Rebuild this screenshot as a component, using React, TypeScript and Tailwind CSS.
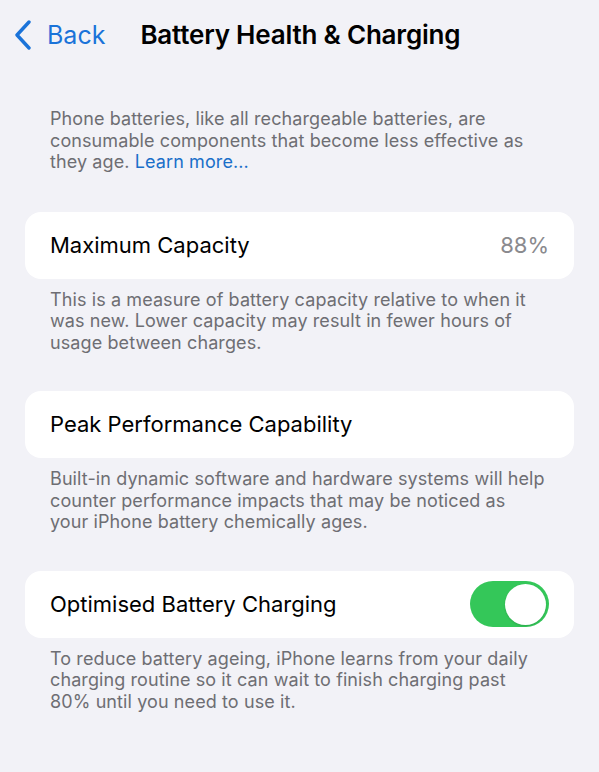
import React from "react";

function Card({ children }: { children: React.ReactNode }) {
  return (
    <div className="mx-[25px] h-[67px] rounded-[16px] bg-white flex items-center justify-between pl-[25px] pr-[25px]">
      {children}
    </div>
  );
}

function Footer({ children }: { children: React.ReactNode }) {
  return (
    <p className="ml-[50px] mr-[52px] mt-[10px] text-[18px] leading-[21.5px] text-[#6e6e73] tracking-[0.1px]">
      {children}
    </p>
  );
}

export default function App() {
  return (
    <div
      className="w-[599px] h-[772px] bg-[#f2f2f7] overflow-hidden"
      style={{ fontFamily: "Inter, 'Noto Sans', sans-serif" }}
    >
      <div className="h-[70px] flex items-center">
        <div className="flex items-center pl-[14px] text-[#1a73d9]">
          <svg width="18" height="30" viewBox="0 0 18 30">
            <path d="M15 2 L3 15 L15 28" fill="none" stroke="currentColor" strokeWidth="3.4" strokeLinecap="round" strokeLinejoin="round" />
          </svg>
          <span className="ml-[15px] text-[25px] leading-none">Back</span>
        </div>
        <span className="ml-[35px] text-[26px] font-semibold leading-none text-black tracking-[-0.2px]">
          Battery Health &amp; Charging
        </span>
      </div>

      <p className="ml-[50px] mr-[52px] mt-[38px] text-[18px] leading-[21.5px] text-[#6e6e73] tracking-[0.1px]">
        Phone batteries, like all rechargeable batteries, are consumable components that become less effective as they age.{" "}
        <span className="text-[#1a6fc9]">Learn more...</span>
      </p>

      <div className="mt-[39px]">
        <Card>
          <span className="text-[22px] text-black">Maximum Capacity</span>
          <span className="text-[22px] text-[#8a8a8e]">88%</span>
        </Card>
        <Footer>
          This is a measure of battery capacity relative to when it was new. Lower capacity may result in fewer hours of usage between charges.
        </Footer>
      </div>

      <div className="mt-[38px]">
        <Card>
          <span className="text-[22px] text-black">Peak Performance Capability</span>
        </Card>
        <Footer>
          Built-in dynamic software and hardware systems will help counter performance impacts that may be noticed as
          <br />
          your iPhone battery chemically ages.
        </Footer>
      </div>

      <div className="mt-[38px]">
        <Card>
          <span className="text-[22px] text-black">Optimised Battery Charging</span>
          <div className="w-[79px] h-[46px] rounded-full bg-[#34c759] flex items-center justify-end pr-[3px]">
            <div className="w-[41px] h-[41px] rounded-full bg-white shadow-[0_1px_2px_rgba(0,0,0,0.15)]" />
          </div>
        </Card>
        <Footer>
          To reduce battery ageing, iPhone learns from your daily charging routine so it can wait to finish charging past
          <br />
          80% until you need to use it.
        </Footer>
      </div>
    </div>
  );
}
